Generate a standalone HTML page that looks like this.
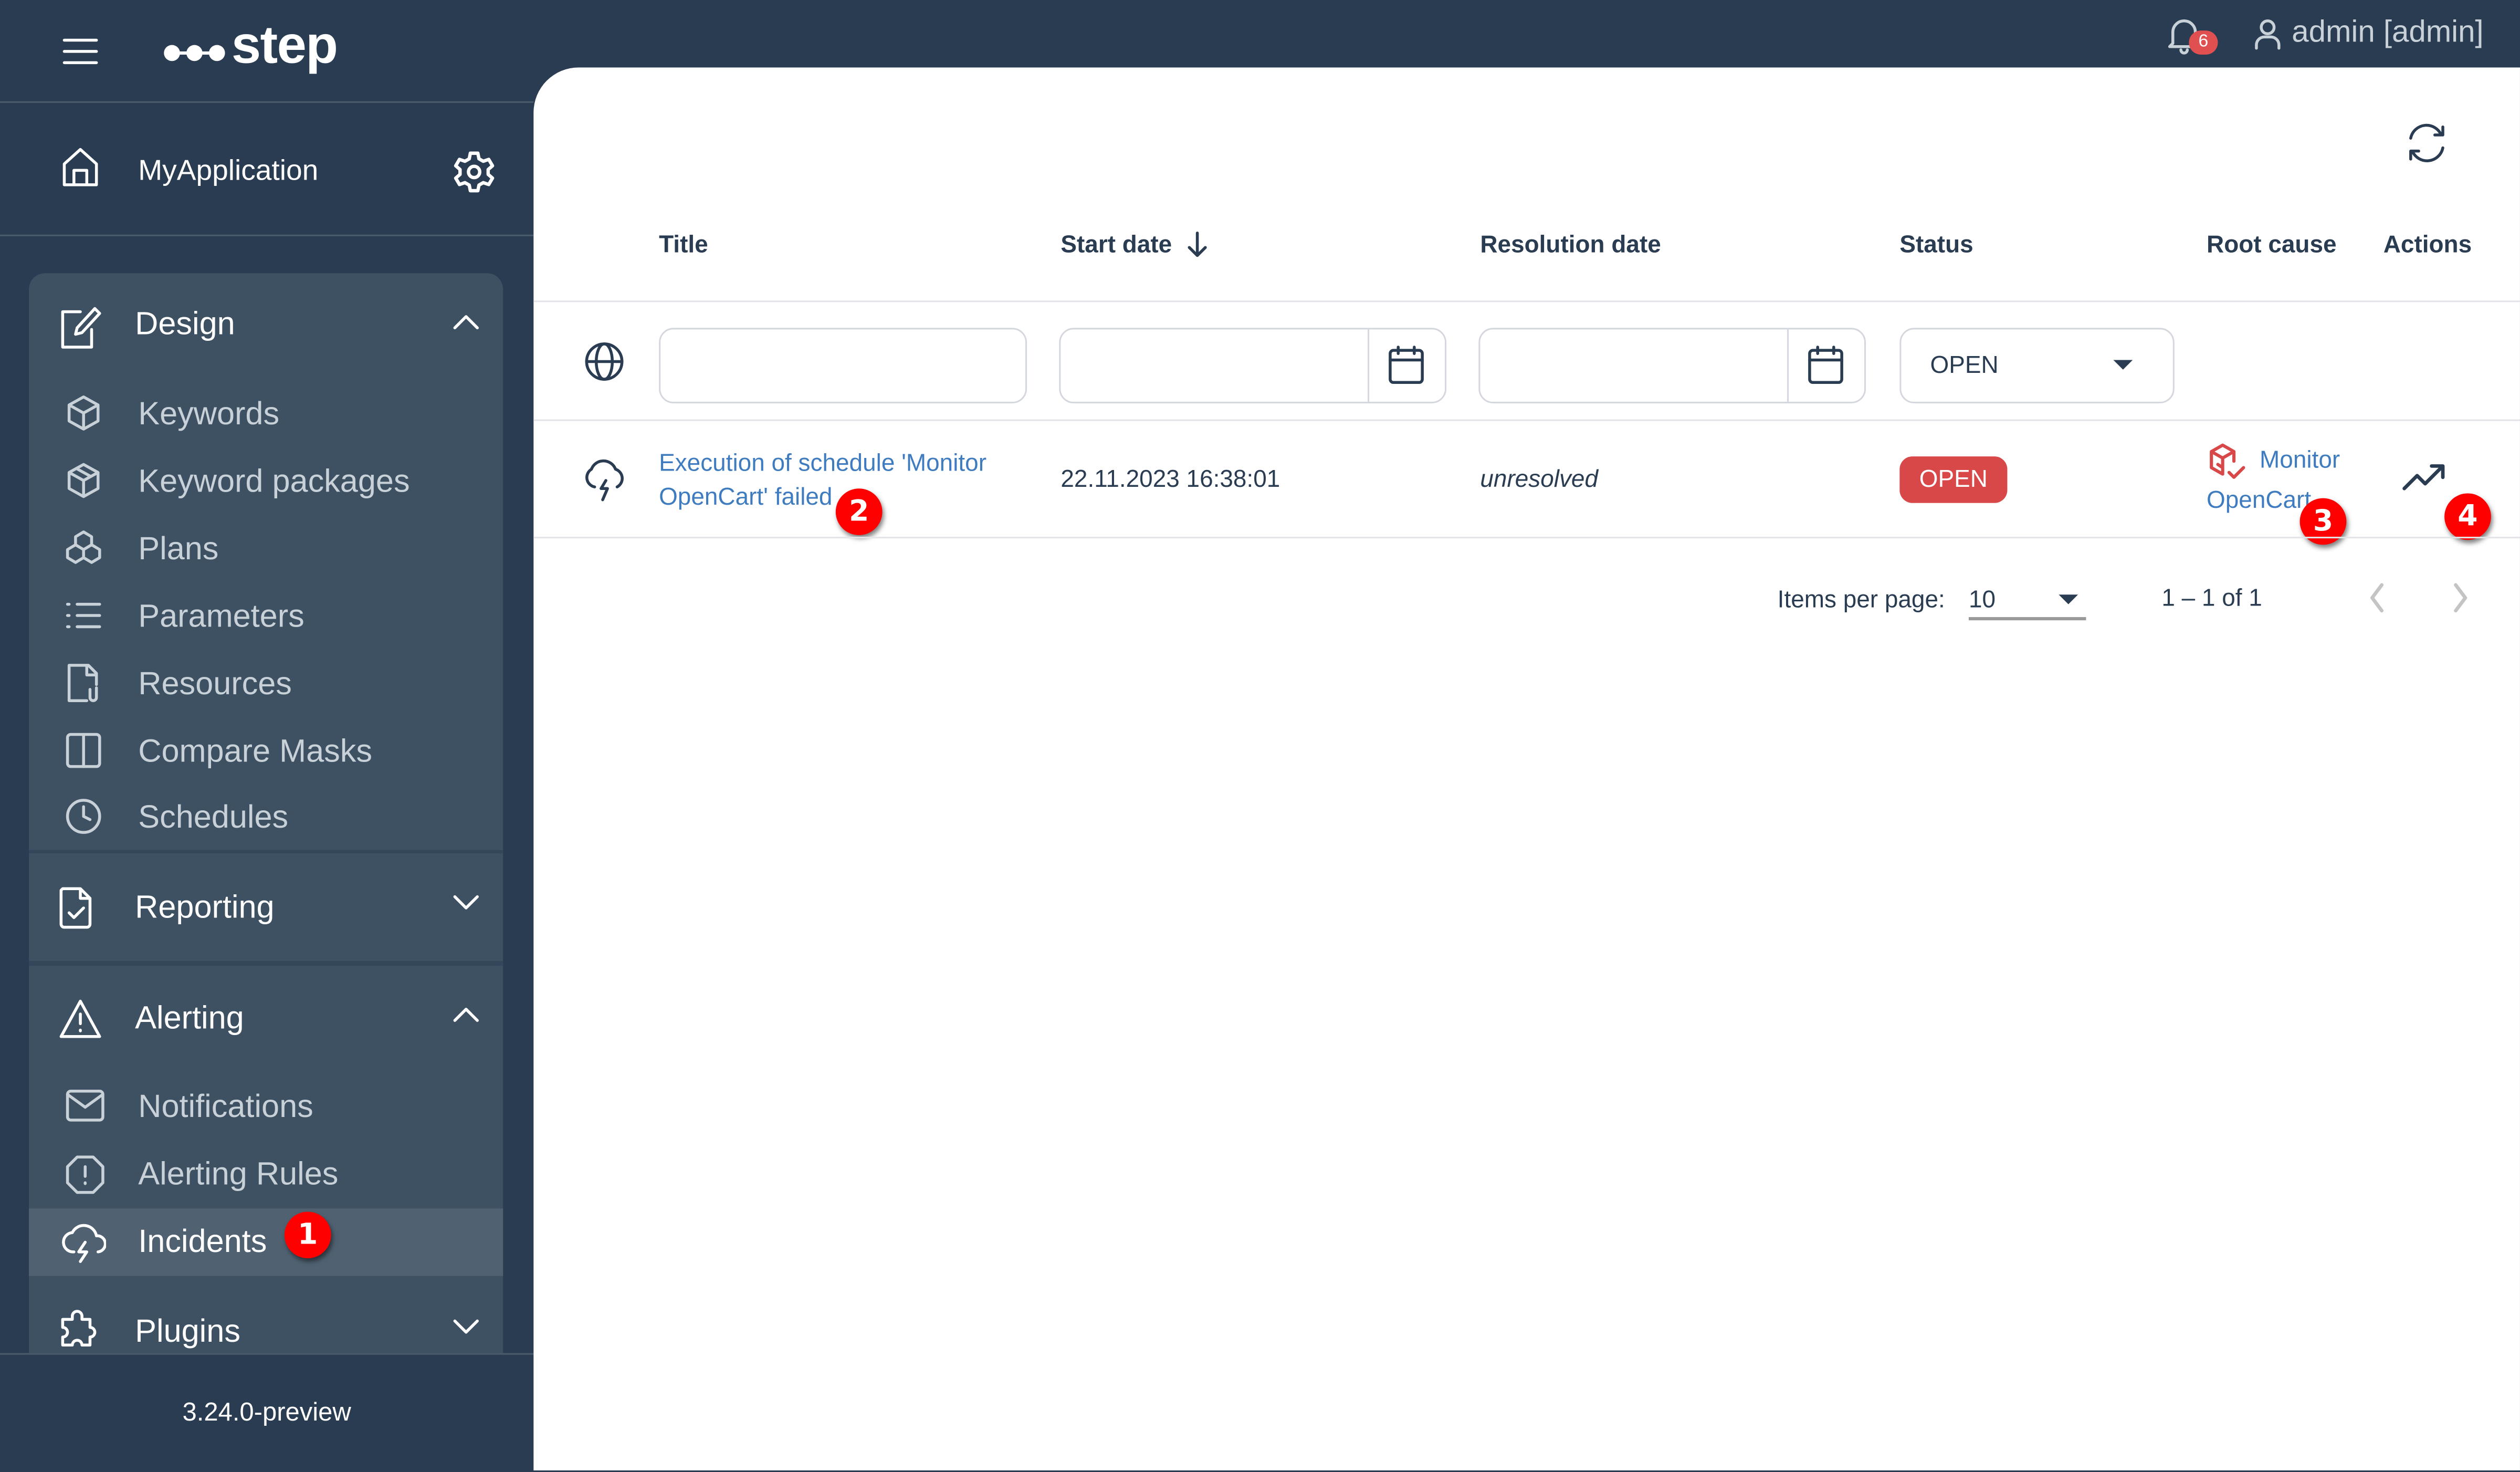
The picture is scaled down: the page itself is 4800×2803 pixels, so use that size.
<!DOCTYPE html>
<html><head><meta charset="utf-8"><style>
html,body{margin:0;padding:0;width:4800px;height:2800px;overflow:hidden;background:#2a3c51}
#s{position:absolute;left:0;top:0;width:1568px;height:915px;transform:scale(3.0612,3.0601);transform-origin:0 0;font-family:"Liberation Sans",sans-serif;background:#2a3c51}
.a{position:absolute;white-space:nowrap}
.ic{position:absolute;fill:none;stroke-width:1.8;stroke-linecap:round;stroke-linejoin:round}
.w{stroke:#fff}.g{stroke:#c8d0d8}.d{stroke:#2a3c51}
.it{color:#c8d0d8;font-size:20px}
.hd{color:#fff;font-size:20px}
.th{color:#2a3c51;font-size:15px;font-weight:bold;letter-spacing:0}
.badge{position:absolute;width:29px;height:29px;border-radius:50%;background:#f00;color:#fff;font-weight:bold;font-size:18px;text-align:center;line-height:29px;box-shadow:1px 2px 3px rgba(0,0,0,.5);font-family:"DejaVu Sans",sans-serif}
.inp{position:absolute;border:1px solid #d4d8de;border-radius:9px;background:#fff}
</style></head><body><div id="s">
<svg class="ic w" style="left:38px;top:22px" width="24" height="20" viewBox="0 0 24 20"><path d="M2 3h20M2 10h20M2 17h20"/></svg>
<div class="a" style="left:101px;top:28px;width:40px;height:8px">
<span style="position:absolute;left:1px;top:0;width:10px;height:10px;border-radius:50%;background:#fff"></span>
<span style="position:absolute;left:15px;top:0;width:10px;height:10px;border-radius:50%;background:#fff"></span>
<span style="position:absolute;left:29px;top:0;width:10px;height:10px;border-radius:50%;background:#fff"></span>
<span style="position:absolute;left:4px;top:4px;width:32px;height:2px;background:#fff"></span></div>
<div class="a" style="left:144px;top:9px;color:#fff;font-size:33px;font-weight:bold;letter-spacing:-0.5px">step</div>
<svg class="ic" style="left:1348px;top:10px;stroke:#c8d0d8" width="22" height="24" viewBox="0 0 22 24"><path d="M4 17V10a7 7 0 0 1 14 0v7l2 2H2l2-2zM9 21a2 2 0 0 0 4 0"/></svg>
<div class="a" style="left:1362px;top:19px;width:18px;height:15px;border-radius:8px;background:#e05050;color:#fff;font-size:11px;text-align:center;line-height:15px">6</div>
<svg class="ic" style="left:1401px;top:11px;stroke:#c8d0d8" width="20" height="20" viewBox="0 0 20 20"><circle cx="10" cy="6" r="4"/><path d="M3 19v-2a5 5 0 0 1 5-5h4a5 5 0 0 1 5 5v2"/></svg>
<div class="a" style="left:1426px;top:10px;color:#c8d0d8;font-size:19px">admin [admin]</div>
<div class="a" style="left:0;top:63px;width:332px;height:1px;background:#4a5b6c"></div>
<svg class="ic w" style="left:37px;top:92px" width="26" height="26" viewBox="0 0 26 26"><path d="M3 23V10l10-9 10 9v13zM9 23v-9h8v9"/></svg>
<div class="a hd" style="left:86px;top:96px;font-size:18px">MyApplication</div>
<svg class="ic w" style="left:281px;top:93px" width="28" height="28" viewBox="0 0 24 24"><circle cx="12" cy="12" r="3"/><path d="M10 2h4l.6 3 2.3 1.3 2.9-1 2 3.4-2.3 2v2.6l2.3 2-2 3.4-2.9-1-2.3 1.3-.6 3h-4l-.6-3-2.3-1.3-2.9 1-2-3.4 2.3-2v-2.6l-2.3-2 2-3.4 2.9 1L9.4 5z"/></svg>
<div class="a" style="left:0;top:146px;width:332px;height:1px;background:#4a5b6c"></div>
<div class="a" style="left:18px;top:170px;width:295px;height:672px;background:#3e5163;border-radius:10px 10px 0 0"></div>
<svg class="ic w" style="left:36px;top:190px" width="28" height="28" viewBox="0 0 28 28"><path d="M14 4H3v22h18V15M23 2l3 3-11 12-4 1 1-4z"/></svg>
<div class="a hd" style="left:84px;top:191px">Design</div>
<svg class="ic w" style="left:281px;top:194px" width="18" height="12" viewBox="0 0 18 12"><path d="M2 10l7-7 7 7"/></svg>
<svg class="ic g" style="left:40px;top:245px" width="24" height="24" viewBox="0 0 24 24"><path d="M12 2l9 5v10l-9 5-9-5V7zM3 7l9 5 9-5M12 12v10"/></svg>
<div class="a it" style="left:86px;top:247px">Keywords</div>
<svg class="ic g" style="left:40px;top:287px" width="24" height="24" viewBox="0 0 24 24"><path d="M12 2l9 5v10l-9 5-9-5V7zM3 7l9 5 9-5M12 12v10M7.5 4.5l9 5"/></svg>
<div class="a it" style="left:86px;top:289px">Keyword packages</div>
<svg class="ic g" style="left:39px;top:329px" width="26" height="24" viewBox="0 0 26 24"><path d="M13 2l5 3v5l-5 3-5-3V5zM8 10l5 3v5l-5 3-5-3v-5zM18 10l5 3v5l-5 3-5-3v-5z"/></svg>
<div class="a it" style="left:86px;top:331px">Plans</div>
<svg class="ic g" style="left:40px;top:371px" width="24" height="24" viewBox="0 0 24 24"><path d="M2 5h1M8 5h14M2 12h1M8 12h14M2 19h1M8 19h14"/></svg>
<div class="a it" style="left:86px;top:373px">Parameters</div>
<svg class="ic g" style="left:40px;top:412px" width="24" height="26" viewBox="0 0 24 26"><path d="M14 24H3V2h12l5 5v7M14 2v6h6M16 17v5a2 2 0 0 0 4 0v-6"/></svg>
<div class="a it" style="left:86px;top:415px">Resources</div>
<svg class="ic g" style="left:40px;top:455px" width="24" height="24" viewBox="0 0 24 24"><rect x="2" y="2" width="20" height="20" rx="2"/><path d="M12 2v20"/></svg>
<div class="a it" style="left:86px;top:457px">Compare Masks</div>
<svg class="ic g" style="left:40px;top:496px" width="24" height="24" viewBox="0 0 24 24"><circle cx="12" cy="12" r="10"/><path d="M12 6v6l4 2"/></svg>
<div class="a it" style="left:86px;top:498px">Schedules</div>
<div class="a" style="left:18px;top:529px;width:295px;height:2px;background:#344659"></div>
<svg class="ic w" style="left:36px;top:551px" width="22" height="28" viewBox="0 0 22 28"><path d="M3 2h11l6 6v16a2 2 0 0 1-2 2H4a2 2 0 0 1-2-2V3zM14 2v6h6M7 17l3 3 6-6"/></svg>
<div class="a hd" style="left:84px;top:554px">Reporting</div>
<svg class="ic w" style="left:281px;top:556px" width="18" height="12" viewBox="0 0 18 12"><path d="M2 2l7 7 7-7"/></svg>
<div class="a" style="left:18px;top:598px;width:295px;height:3px;background:#344659"></div>
<svg class="ic w" style="left:36px;top:621px" width="28" height="26" viewBox="0 0 28 26"><path d="M14 2L26 24H2zM14 10v6M14 20v.5"/></svg>
<div class="a hd" style="left:84px;top:623px">Alerting</div>
<svg class="ic w" style="left:281px;top:625px" width="18" height="12" viewBox="0 0 18 12"><path d="M2 10l7-7 7 7"/></svg>
<svg class="ic g" style="left:40px;top:677px" width="26" height="22" viewBox="0 0 26 22"><rect x="2" y="2" width="22" height="18" rx="2"/><path d="M2 4l11 8 11-8"/></svg>
<div class="a it" style="left:86px;top:678px">Notifications</div>
<svg class="ic g" style="left:40px;top:718px" width="26" height="26" viewBox="0 0 26 26"><path d="M8 2h10l6 6v10l-6 6H8l-6-6V8zM13 8v6M13 18v.5"/></svg>
<div class="a it" style="left:86px;top:720px">Alerting Rules</div>
<div class="a" style="left:18px;top:752px;width:295px;height:42px;background:#506272"></div>
<svg class="ic" style="left:38px;top:759px;stroke:#fff" width="28" height="28" viewBox="0 0 28 28"><path d="M8 20a6 6 0 0 1-1-12 8 8 0 0 1 15 2 5 5 0 0 1 1 10M15 14l-4 6h5l-4 6"/></svg>
<div class="a" style="left:86px;top:762px;color:#fff;font-size:20px">Incidents</div>
<div class="badge" style="left:177px;top:754px">1</div>
<svg class="ic w" style="left:35px;top:815px" width="28" height="28" viewBox="0 0 28 28"><path d="M10 4a3 3 0 0 1 6 0v2h5v5a3 3 0 0 1 0 6v5h-5a3 3 0 0 0-6 0H4v-5a3 3 0 0 0 0-6V6h6z"/></svg>
<div class="a hd" style="left:84px;top:818px">Plugins</div>
<svg class="ic w" style="left:281px;top:820px" width="18" height="12" viewBox="0 0 18 12"><path d="M2 2l7 7 7-7"/></svg>
<div class="a" style="left:0;top:842px;width:332px;height:73px;background:#2a3c51;border-top:1px solid #4a5b6c"></div>
<div class="a" style="left:0;top:871px;width:332px;text-align:center;color:#fff;font-size:16px">3.24.0-preview</div>
<div class="a" style="left:332px;top:42px;width:1236px;height:873px;background:#fff;border-radius:28px 0 0 0"></div>
<svg class="ic d" style="left:1496px;top:76px" width="28" height="26" viewBox="0 0 28 26"><path d="M4 10a10 10 0 0 1 19-2M24 16a10 10 0 0 1-19 2M24 3v5h-5M4 23v-5h5"/></svg>
<div class="a th" style="left:410px;top:144px">Title</div>
<div class="a th" style="left:660px;top:144px">Start date</div>
<svg class="ic d" style="left:737px;top:143px" width="16" height="18" viewBox="0 0 16 18"><path d="M8 2v14M3 11l5 5 5-5"/></svg>
<div class="a th" style="left:921px;top:144px">Resolution date</div>
<div class="a th" style="left:1182px;top:144px">Status</div>
<div class="a th" style="left:1373px;top:144px">Root cause</div>
<div class="a th" style="left:1483px;top:144px">Actions</div>
<div class="a" style="left:332px;top:187px;width:1236px;height:1px;background:#e2e4e8"></div>
<svg class="ic d" style="left:363px;top:212px" width="26" height="26" viewBox="0 0 26 26"><circle cx="13" cy="13" r="11"/><ellipse cx="13" cy="13" rx="5" ry="11"/><path d="M2 13h22"/></svg>
<div class="inp" style="left:410px;top:204px;width:227px;height:45px"></div>
<div class="inp" style="left:659px;top:204px;width:239px;height:45px"></div>
<div class="a" style="left:851px;top:205px;width:1px;height:45px;background:#d4d8de"></div>
<svg class="ic d" style="left:863px;top:214px" width="24" height="26" viewBox="0 0 24 26"><rect x="2" y="4" width="20" height="20" rx="2"/><path d="M2 10h20M7 2v4M17 2v4"/></svg>
<div class="inp" style="left:920px;top:204px;width:239px;height:45px"></div>
<div class="a" style="left:1112px;top:205px;width:1px;height:45px;background:#d4d8de"></div>
<svg class="ic d" style="left:1124px;top:214px" width="24" height="26" viewBox="0 0 24 26"><rect x="2" y="4" width="20" height="20" rx="2"/><path d="M2 10h20M7 2v4M17 2v4"/></svg>
<div class="inp" style="left:1182px;top:204px;width:169px;height:45px"></div>
<div class="a" style="left:1201px;top:219px;color:#2a3c51;font-size:15px">OPEN</div>
<div class="a" style="left:1315px;top:224px;width:0;height:0;border-left:6px solid transparent;border-right:6px solid transparent;border-top:6px solid #2a3c51"></div>
<div class="a" style="left:332px;top:261px;width:1236px;height:1px;background:#e2e4e8"></div>
<svg class="ic d" style="left:362px;top:283px" width="28" height="30" viewBox="0 0 28 30"><path d="M8 20a6 6 0 0 1-2-11 8 8 0 0 1 15 0 6 6 0 0 1 1 11M15 16l-3 5h4l-3 7"/></svg>
<div class="a" style="left:410px;top:278px;color:#3f7cbf;font-size:15px;line-height:21px;white-space:normal;width:225px">Execution of schedule 'Monitor OpenCart' failed</div>
<div class="badge" style="left:520px;top:304px">2</div>
<div class="a" style="left:660px;top:290px;color:#2a3c51;font-size:15px">22.11.2023 16:38:01</div>
<div class="a" style="left:921px;top:290px;color:#2a3c51;font-size:15px;font-style:italic">unresolved</div>
<div class="a" style="left:1182px;top:284px;width:67px;height:29px;border-radius:8px;background:#d94848;color:#fff;font-size:15px;text-align:center;line-height:29px">OPEN</div>
<svg class="ic" style="left:1373px;top:275px;stroke:#d94848;stroke-width:2" width="26" height="26" viewBox="0 0 26 26"><path d="M10 2l7 4v6M10 2L3 6v10l7 4M3 6l7 4 7-4M10 10v10M7 14l3 2M14 19l3 3 6-6"/></svg>
<div class="a" style="left:1406px;top:278px;color:#3f7cbf;font-size:15px">Monitor</div>
<div class="a" style="left:1373px;top:303px;color:#3f7cbf;font-size:15px">OpenCart</div>
<div class="badge" style="left:1431px;top:310px">3</div>
<svg class="ic d" style="left:1494px;top:286px;stroke-width:2.2" width="30" height="22" viewBox="0 0 30 22"><path d="M2 18l8-8 5 5 11-11M19 4h7v7"/></svg>
<div class="badge" style="left:1521px;top:307px">4</div>
<div class="a" style="left:332px;top:334px;width:1236px;height:1px;background:#e2e4e8"></div>
<div class="a" style="left:1106px;top:365px;color:#2a3c51;font-size:15px">Items per page:</div>
<div class="a" style="left:1225px;top:365px;color:#2a3c51;font-size:15px">10</div>
<div class="a" style="left:1281px;top:370px;width:0;height:0;border-left:6px solid transparent;border-right:6px solid transparent;border-top:6px solid #2a3c51"></div>
<div class="a" style="left:1225px;top:384px;width:73px;height:2px;background:#999"></div>
<div class="a" style="left:1345px;top:364px;color:#2a3c51;font-size:15px">1 – 1 of 1</div>
<svg class="ic" style="left:1472px;top:362px;stroke:#c4c4c4;stroke-width:2.2" width="14" height="20" viewBox="0 0 14 20"><path d="M10 2L4 10l6 8"/></svg>
<svg class="ic" style="left:1524px;top:362px;stroke:#c4c4c4;stroke-width:2.2" width="14" height="20" viewBox="0 0 14 20"><path d="M4 2l6 8-6 8"/></svg>
</div></body></html>
